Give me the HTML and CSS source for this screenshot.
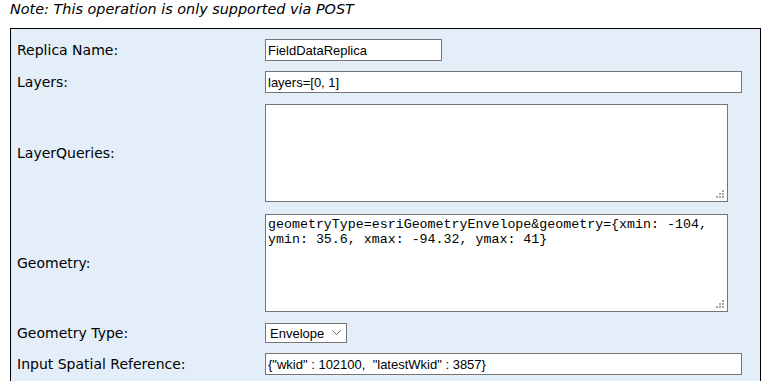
FILE: index.html
```html
<!DOCTYPE html>
<html lang="en">
<head>
    <meta charset="UTF-8">
    <title>Create Replica</title>
    <link rel="stylesheet" href="styles.css">
</head>
<body>

    <p class="note">Note: This operation is only supported via POST</p>

    <form class="form-box" method="post">
        <div class="row">
            <label for="replicaName">Replica Name:</label>
            <input type="text" id="replicaName" class="field field-short" value="FieldDataReplica">
        </div>
        <div class="row">
            <label for="layers">Layers:</label>
            <input type="text" id="layers" class="field field-long" value="layers=[0, 1]">
        </div>
        <div class="row">
            <label for="layerQueries">LayerQueries:</label>
            <span class="area-wrap">
                <textarea id="layerQueries" class="area"></textarea>
                <svg class="grip" width="9" height="9" viewBox="0 0 9 9"><g fill="#a8a8a8"><rect x="6" y="0" width="2" height="2"/><rect x="3" y="3" width="2" height="2"/><rect x="6" y="3" width="2" height="2"/><rect x="0" y="6" width="2" height="2"/><rect x="3" y="6" width="2" height="2"/><rect x="6" y="6" width="2" height="2"/></g></svg>
            </span>
        </div>
        <div class="row">
            <label for="geometry">Geometry:</label>
            <span class="area-wrap">
                <textarea id="geometry" class="area">geometryType=esriGeometryEnvelope&amp;geometry={xmin: -104, ymin: 35.6, xmax: -94.32, ymax: 41}</textarea>
                <svg class="grip" width="9" height="9" viewBox="0 0 9 9"><g fill="#a8a8a8"><rect x="6" y="0" width="2" height="2"/><rect x="3" y="3" width="2" height="2"/><rect x="6" y="3" width="2" height="2"/><rect x="0" y="6" width="2" height="2"/><rect x="3" y="6" width="2" height="2"/><rect x="6" y="6" width="2" height="2"/></g></svg>
            </span>
        </div>
        <div class="row">
            <label for="geometryType">Geometry Type:</label>
            <span class="select-wrap">
                <select id="geometryType" class="select">
                    <option>Envelope</option>
                    <option>Point</option>
                    <option>Polygon</option>
                </select>
                <svg class="chevron" width="9" height="6" viewBox="0 0 9 6"><path d="M0.5 0.5 L4.5 4.5 L8.5 0.5" fill="none" stroke="#666" stroke-width="1"/></svg>
            </span>
        </div>
        <div class="row">
            <label for="inSR">Input Spatial Reference:</label>
            <input type="text" id="inSR" class="field field-long" value='{"wkid" : 102100,  "latestWkid" : 3857}'>
        </div>
    </form>

</body>
</html>
```

FILE: styles.css
```css
body {
    font-family: "DejaVu Sans", Verdana, sans-serif;
    font-size: 14px;
    color: #000;
    margin: 0;
    padding: 1px 10px;
    background: #fff;
}
.note {
    font-size: 14.4px;
    font-style: italic;
    margin: 0 0 10px 0;
    line-height: 17px;
}
.form-box {
    width: 751px;
    box-sizing: border-box;
    background-color: #e4eef8;
    border: 1px solid #000;
    padding: 5px 6px 10px;
}
.row {
    display: flex;
    align-items: center;
    padding: 5px 0;
}
.row label {
    flex: 0 0 248px;
}
.field, .area, .select {
    box-sizing: border-box;
    border: 1px solid #767676;
    background: #fff;
    color: #000;
    margin: 0;
}
.field {
    height: 22px;
    padding: 1px 2px;
    font-family: "Liberation Sans", Arial, sans-serif;
    font-size: 13px;
}
.field-short {
    width: 177px;
}
.field-long {
    width: 477px;
}
.area-wrap {
    position: relative;
    display: block;
    margin: 1px 0;
}
.area {
    display: block;
    width: 463px;
    height: 98px;
    padding: 2px 2px;
    font-family: "Liberation Mono", "Courier New", monospace;
    font-size: 13.3px;
    line-height: 15px;
    resize: none;
}
.grip {
    position: absolute;
    right: 3px;
    bottom: 3px;
    pointer-events: none;
}
.select-wrap {
    position: relative;
    display: inline-block;
}
.select {
    appearance: none;
    display: block;
    width: 82px;
    height: 20px;
    padding: 0 4px;
    font-family: "Liberation Sans", Arial, sans-serif;
    font-size: 13px;
}
.chevron {
    position: absolute;
    right: 6px;
    top: 7px;
    pointer-events: none;
}
```
